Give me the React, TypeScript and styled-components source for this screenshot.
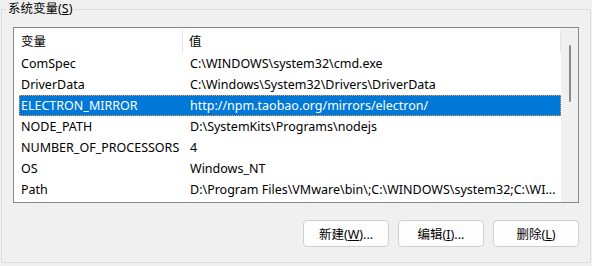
import styled, { createGlobalStyle } from "styled-components";

const GlobalStyle = createGlobalStyle`
    html, body {
        margin: 0;
        padding: 0;
        background: #f0f0f0;
    }
    body {
        font-family: "Noto Sans", "Noto Sans CJK SC", sans-serif;
        font-size: 12.5px;
        color: #000;
    }
`

const GroupBox = styled.fieldset`
    width: 590px;
    height: 263px;
    box-sizing: border-box;
    margin: 0 0 0 1px;
    padding: 0 11px;
    border: 1px solid #dcdcdc;
    border-radius: 1px;
`

const Legend = styled.legend`
    padding: 0 2px;
    margin-left: -7px;
    line-height: 18px;
`

const ListBox = styled.div`
    margin-top: 9px;
    height: 176px;
    display: flex;
    border: 1px solid #838790;
    background: #fff;
    box-sizing: border-box;
`

const ListMain = styled.div`
    flex: 1;
    display: flex;
    flex-direction: column;
    min-width: 0;
`

const HeaderRow = styled.div`
    display: flex;
    height: 25px;
    align-items: center;
    padding-left: 5px;
`

const HeaderCell = styled.div<{ $width?: number }>`
    ${p => p.$width ? `width: ${p.$width}px;` : "flex: 1;"}
    height: 24px;
    box-sizing: border-box;
    display: flex;
    align-items: center;
    padding-left: ${p => p.$width ? 2 : 6}px;
    border-right: 1px solid #e5e5e5;
`

const Row = styled.div<{ $selected?: boolean }>`
    display: flex;
    height: 21px;
    margin-left: 5px;
    align-items: center;
    white-space: nowrap;
    box-sizing: border-box;
    background: ${p => p.$selected ? "#0078d7" : "transparent"};
    color: ${p => p.$selected ? "#fff" : "#000"};
    outline: ${p => p.$selected ? "1px dotted #f59a4c" : "none"};
    outline-offset: -1px;
`

const Cell = styled.div<{ $width?: number }>`
    ${p => p.$width ? `width: ${p.$width}px;` : "flex: 1;"}
    padding-left: ${p => p.$width ? 2 : 7}px;
    box-sizing: border-box;
    overflow: hidden;
    text-overflow: ellipsis;
`

const ScrollTrack = styled.div`
    width: 17px;
    background: #f0f0f0;
    display: flex;
    justify-content: center;
    padding-top: 17px;
    box-sizing: border-box;
`

const Thumb = styled.div`
    width: 2px;
    height: 57px;
    background: #8a8a8a;
    border-radius: 1px;
`

const ButtonBar = styled.div`
    display: flex;
    justify-content: flex-end;
    gap: 9px;
    margin-top: 17px;
`

const Button = styled.button`
    width: 86px;
    height: 27px;
    border: 1px solid #d0d0d0;
    border-radius: 4px;
    background: #fdfdfd;
    font-family: inherit;
    font-size: 12.5px;
    color: #000;
    padding: 0;
`

const Key = styled.span`
    text-decoration: underline;
`

const rows: [string, string][] = [
    ["ComSpec", "C:\\WINDOWS\\system32\\cmd.exe"],
    ["DriverData", "C:\\Windows\\System32\\Drivers\\DriverData"],
    ["ELECTRON_MIRROR", "http://npm.taobao.org/mirrors/electron/"],
    ["NODE_PATH", "D:\\SystemKits\\Programs\\nodejs"],
    ["NUMBER_OF_PROCESSORS", "4"],
    ["OS", "Windows_NT"],
    ["Path", "D:\\Program Files\\VMware\\bin\\;C:\\WINDOWS\\system32;C:\\WI..."],
];

const App = () => {
    return (
        <>
            <GlobalStyle/>
            <GroupBox>
                <Legend>系统变量(<Key>S</Key>)</Legend>
                <ListBox>
                    <ListMain>
                        <HeaderRow>
                            <HeaderCell $width={164}>变量</HeaderCell>
                            <HeaderCell>值</HeaderCell>
                        </HeaderRow>
                        {rows.map(([name, value], i) => (
                            <Row key={name} $selected={i === 2}>
                                <Cell $width={164}>{name}</Cell>
                                <Cell>{value}</Cell>
                            </Row>
                        ))}
                    </ListMain>
                    <ScrollTrack>
                        <Thumb/>
                    </ScrollTrack>
                </ListBox>
                <ButtonBar>
                    <Button>新建(<Key>W</Key>)...</Button>
                    <Button>编辑(<Key>I</Key>)...</Button>
                    <Button>删除(<Key>L</Key>)</Button>
                </ButtonBar>
            </GroupBox>
        </>
    );
};

export default App;
